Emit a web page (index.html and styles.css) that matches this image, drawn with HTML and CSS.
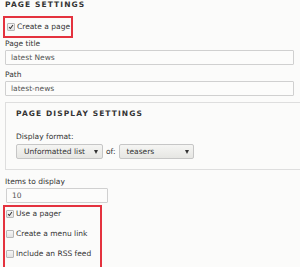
FILE: index.html
```html
<!DOCTYPE html>
<html lang="en">
<head>
    <meta charset="UTF-8">
    <meta name="viewport" content="width=device-width, initial-scale=1.0">
    <title>Page Settings</title>
    <link rel="stylesheet" href="styles.css">
</head>
<body>

    <div class="page">
        <h2 class="section-title">Page settings</h2>

        <!-- Create page toggle -->
        <div class="highlight first">
            <div class="check-row">
                <span class="box checked"><svg viewBox="0 0 8 8"><path d="M1.5 4.2 L3.2 6 L6.6 1.4" /></svg></span>
                <span>Create a page</span>
            </div>
        </div>

        <div class="field">
            <label>Page title</label>
            <div class="text-input">latest News</div>
        </div>
        <div class="field path">
            <label>Path</label>
            <div class="text-input">latest-news</div>
        </div>

        <!-- Display settings -->
        <div class="sub-settings">
            <h3 class="section-title">Page display settings</h3>
            <label class="format-label">Display format:</label>
            <div class="format-row">
                <div class="select wide">Unformatted list <span class="arrow"></span></div>
                <span class="of">of:</span>
                <div class="select narrow">teasers <span class="arrow"></span></div>
            </div>
        </div>

        <div class="field items">
            <label>Items to display</label>
            <div class="text-input short">10</div>
        </div>

        <!-- Extra options -->
        <div class="highlight second">
            <div class="check-row">
                <span class="box checked"><svg viewBox="0 0 8 8"><path d="M1.5 4.2 L3.2 6 L6.6 1.4" /></svg></span>
                <span>Use a pager</span>
            </div>
            <div class="check-row">
                <span class="box"></span>
                <span>Create a menu link</span>
            </div>
            <div class="check-row">
                <span class="box"></span>
                <span>Include an RSS feed</span>
            </div>
        </div>
    </div>

</body>
</html>
```

FILE: styles.css
```css
/* General Styles */
body {
    margin: 0;
    padding: 0;
    background-color: #fff;
    font-family: "DejaVu Sans", "Liberation Sans", sans-serif;
    font-size: 7.5px;
    color: #333;
    overflow: hidden;
}

.page {
    height: 267px;
    padding: 0 6px 0 5px;
    background-color: #fbfbfa;
}

.section-title {
    margin: 0;
    font-size: 7.5px;
    line-height: 10px;
    font-weight: bold;
    text-transform: uppercase;
    letter-spacing: 1.1px;
    color: #333;
}

/* Red highlight boxes */
.highlight {
    border: 2px solid #e4323e;
    margin-left: -2px;
    box-sizing: border-box;
}

.highlight.first {
    width: 70px;
    height: 22px;
    margin-top: 6px;
    padding: 4px 0 0 2px;
}

.highlight.second {
    width: 99px;
    height: 65px;
    margin-top: 2px;
    padding: 2px 0 0 1px;
}

.check-row {
    display: flex;
    align-items: center;
    gap: 2px;
    height: 10px;
    line-height: 10px;
    white-space: nowrap;
    color: #333;
}

.highlight.second .check-row + .check-row {
    margin-top: 10px;
}

.box {
    width: 6px;
    height: 6px;
    border: 1px solid #b8b8b8;
    border-radius: 1px;
    background: linear-gradient(#f6f6f6, #e2e2e2);
    flex-shrink: 0;
}

.box svg {
    display: block;
    width: 6px;
    height: 6px;
}

.box svg path {
    fill: none;
    stroke: #333;
    stroke-width: 1.4;
}

/* Fields */
.field label {
    display: block;
    line-height: 10px;
    margin-top: 1px;
}

.field.path label {
    margin-top: 5px;
}

.field.items label {
    margin-top: 7px;
}

.text-input {
    box-sizing: border-box;
    height: 15px;
    margin-top: 1px;
    padding-left: 5px;
    border: 1px solid #d0d0d0;
    border-radius: 1px;
    background-color: #fcfcfb;
    line-height: 13px;
    color: #555;
}

.text-input.short {
    width: 102px;
    margin-left: 1px;
}

/* Sub fieldset */
.sub-settings {
    margin-top: 6px;
    margin-right: -20px;
    padding: 6px 0 10px 10px;
    border: 1px solid #dedede;
}

.format-label {
    display: block;
    margin-top: 13px;
    line-height: 10px;
}

.format-row {
    display: flex;
    align-items: center;
    margin-top: 2px;
}

.select {
    position: relative;
    box-sizing: border-box;
    height: 15px;
    padding-left: 7px;
    border: 1px solid #c6c6c6;
    border-radius: 2px;
    background: linear-gradient(#f5f5f3, #e6e6e3);
    line-height: 13px;
    white-space: nowrap;
    color: #333;
}

.select.wide {
    width: 87px;
}

.select.narrow {
    width: 75px;
}

.arrow {
    position: absolute;
    right: 4px;
    top: 5px;
    border-left: 2.5px solid transparent;
    border-right: 2.5px solid transparent;
    border-top: 4px solid #333;
}

.of {
    margin: 0 3px 0 3px;
    color: #333;
}
```
